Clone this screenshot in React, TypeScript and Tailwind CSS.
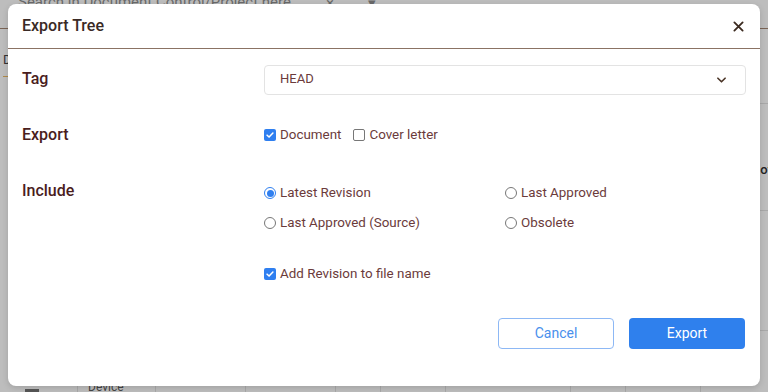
import React from 'react';

const TEXT = 'text-[#6b3b3b]';

function Checkbox({ checked }: { checked?: boolean }) {
  if (checked) {
    return (
      <span className="flex h-3 w-3 shrink-0 items-center justify-center rounded-[2px] bg-[#2f7ff0]">
        <svg viewBox="0 0 12 12" className="h-[10px] w-[10px]" fill="none">
          <path d="M2.5 6.2 4.9 8.5 9.5 3.6" stroke="white" strokeWidth="1.8" strokeLinecap="round" strokeLinejoin="round" />
        </svg>
      </span>
    );
  }
  return <span className="h-3 w-3 shrink-0 rounded-[2px] border border-[#777] bg-white" />;
}

function Radio({ checked }: { checked?: boolean }) {
  if (checked) {
    return (
      <span className="flex h-3 w-3 shrink-0 items-center justify-center rounded-full border border-[#2f7ff0] bg-white">
        <span className="h-[7px] w-[7px] rounded-full bg-[#2f7ff0]" />
      </span>
    );
  }
  return <span className="h-3 w-3 shrink-0 rounded-full border border-[#777] bg-white" />;
}

function Option({ children, radio, checked }: { children: React.ReactNode; radio?: boolean; checked?: boolean }) {
  return (
    <label className={`flex h-5 items-center gap-[4px] text-[13.4px] ${TEXT}`}>
      {radio ? <Radio checked={checked} /> : <Checkbox checked={checked} />}
      <span>{children}</span>
    </label>
  );
}

function Label({ children }: { children: React.ReactNode }) {
  return <div className="w-[242px] shrink-0 text-[16px] font-medium leading-5 text-[#4a1d1d]">{children}</div>;
}

export default function App() {
  return (
    <div className="relative h-[392px] w-full overflow-hidden bg-[#bdbdbd] font-['Roboto',sans-serif]">
      {/* page behind the overlay */}
      <div className="absolute left-[18px] top-[-9px] text-[15px] text-[#6a6a6a]">Search in Document Control/Project here</div>
      <div className="absolute left-[326px] top-[-8px] text-[15px] text-[#6a6a6a]">×</div>
      <div className="absolute left-[368px] top-[-8px] text-[15px] text-[#6a6a6a]">▾</div>
      <div className="absolute left-0 top-[28px] h-px w-[10px] bg-[#7a6455]" />
      <div className="absolute right-0 top-[28px] h-px w-[10px] bg-[#7a6455]" />
      <div className="absolute left-[3px] top-[50px] text-[13px] text-[#333]">D</div>
      <div className="absolute left-[3px] top-[76px] h-px w-[5px] bg-[#b08a4a]" />
      <div className="absolute right-[-4px] top-[160px] text-[13px] font-medium text-[#222]">ot</div>
      <div className="absolute right-0 top-[103px] h-px w-[8px] bg-[#a8a8a8]" />
      <div className="absolute right-0 top-[210px] h-px w-[8px] bg-[#a8a8a8]" />
      <div className="absolute right-0 top-[330px] h-px w-[8px] bg-[#a8a8a8]" />
      <div className="absolute left-[88px] top-[378px] text-[12px] text-[#444]">Device</div>
      <div className="absolute left-[25px] top-[389px] h-[3px] w-[14px] bg-[#555]" />
      {[77, 155, 245, 335, 380, 445, 570, 625, 700].map((x) => (
        <div key={x} className="absolute top-[386px] h-[6px] w-px bg-[#a9a9a9]" style={{ left: x }} />
      ))}

      {/* modal */}
      <div className="absolute left-[8px] top-[4px] flex h-[382px] w-[752px] flex-col rounded-[8px] bg-white shadow-[0_2px_6px_rgba(0,0,0,0.15)]">
        <div className="flex h-[45px] items-center justify-between border-b border-[#8b7364] px-[14px]">
          <h2 className="text-[16px] font-medium text-[#3a2a26]">Export Tree</h2>
          <svg viewBox="0 0 12 12" className="mr-[2px] h-[11px] w-[11px]" fill="none">
            <path d="M1.5 1.5 10.5 10.5M10.5 1.5 1.5 10.5" stroke="#3b2a20" strokeWidth="2" strokeLinecap="round" />
          </svg>
        </div>

        <div className="flex flex-col px-[14px]">
          <div className="mt-[16px] flex items-center">
            <div className="-mt-[3px]">
              <Label>Tag</Label>
            </div>
            <div className="flex h-[30px] w-[482px] items-center justify-between rounded-[4px] border border-[#e3e3e3] pl-[15px] pr-[19px]">
              <span className={`-mt-[3px] text-[13px] ${TEXT}`}>HEAD</span>
              <svg viewBox="0 0 10 6" className="-mt-[1px] h-[6px] w-[9px]" fill="none">
                <path d="M1 1 5 5 9 1" stroke="#4a3426" strokeWidth="1.8" strokeLinecap="round" strokeLinejoin="round" />
              </svg>
            </div>
          </div>

          <div className="mt-[30px] flex items-center">
            <Label>Export</Label>
            <div className="flex gap-[12px]">
              <Option checked>Document</Option>
              <Option>Cover letter</Option>
            </div>
          </div>

          <div className="mt-[36px] flex items-start">
            <Label>Include</Label>
            <div className="grid grid-cols-[241px_1fr] gap-y-[10px] pt-[2px]">
              <Option radio checked>Latest Revision</Option>
              <Option radio>Last Approved</Option>
              <Option radio>Last Approved (Source)</Option>
              <Option radio>Obsolete</Option>
            </div>
          </div>

          <div className="mt-[31px] flex items-center">
            <Label>{''}</Label>
            <Option checked>Add Revision to file name</Option>
          </div>

          <div className="mt-[34px] flex justify-end gap-[15px] pr-[1px]">
            <button className="h-[31px] w-[116px] rounded-[4px] border border-[#8db8f5] bg-white text-[14px] text-[#4a8fec]">
              Cancel
            </button>
            <button className="h-[31px] w-[116px] rounded-[4px] bg-[#2f80ed] text-[14px] text-white">Export</button>
          </div>
        </div>
      </div>
    </div>
  );
}
